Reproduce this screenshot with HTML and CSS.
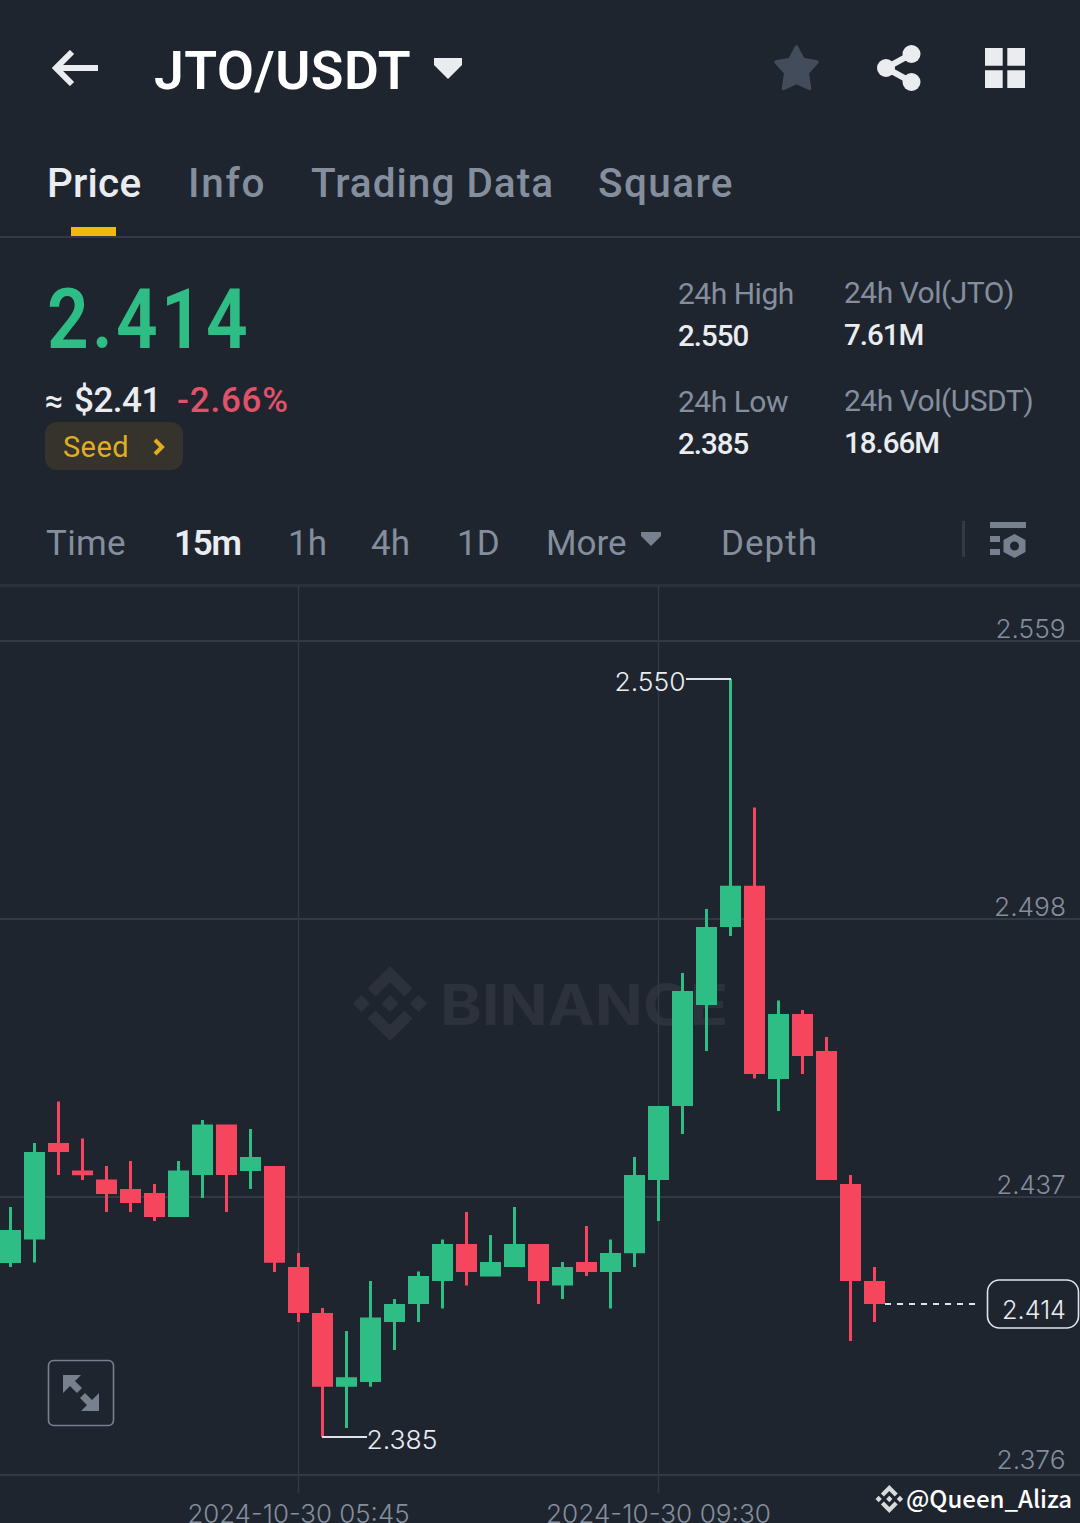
FILE: index.html
```html
<!DOCTYPE html>
<html lang="en">
<head>
<meta charset="utf-8">
<title>JTO/USDT</title>
<link rel="stylesheet" href="styles.css">
</head>
<body>
<header class="topbar">
  <svg class="back" width="46" height="36" viewBox="0 0 46 36"><path d="M20 2 4 18l16 16M4 18h42" fill="none" stroke="currentColor" stroke-width="6"/></svg>
  <h1 class="pair">JTO/USDT</h1>
  <svg class="pair-caret" width="28" height="21" viewBox="0 0 28 21"><path d="M0 0h28v7L14 21 0 7z" fill="currentColor"/></svg>
  <div class="actions">
    <svg class="star" width="45" height="46" viewBox="0 0 45 46"><path d="M22.5 2 29 14.5 43 17 33.2 27.7 35.5 43.5 22.5 37.5 9.500 43.500 11.800 27.700 2 17 16 14.500z" fill="currentColor" stroke="currentColor" stroke-width="3.500" stroke-linejoin="round"/></svg>
    <svg width="44" height="46" viewBox="0 0 44 46"><path d="M34.500 9 9 23l25.500 14" fill="none" stroke="currentColor" stroke-width="6"/><circle cx="34.500" cy="9" r="9" fill="currentColor"/><circle cx="9" cy="23" r="9" fill="currentColor"/><circle cx="34.500" cy="37" r="9" fill="currentColor"/></svg>
    <svg width="40" height="40" viewBox="0 0 40 40"><path d="M0 0h17.700v17.700H0zM22.300 0H40v17.700H22.300zM0 22.300h17.700V40H0zM22.300 22.300H40V40H22.300z" fill="currentColor"/></svg>
  </div>
</header>

<nav class="tabs">
  <span class="tab tab-active">Price</span>
  <span class="tab tab-info">Info</span>
  <span class="tab tab-data">Trading Data</span>
  <span class="tab tab-square">Square</span>
</nav>

<section class="summary">
  <div class="quote">
    <div class="price">2.414</div>
    <div class="change"><span class="approx">≈</span><span class="usd">$2.41</span><span class="percent">-2.66%</span></div>
    <div class="badge">Seed<svg width="12" height="18" viewBox="0 0 12 18"><path d="M2 2l7 7-7 7" fill="none" stroke="currentColor" stroke-width="4"/></svg></div>
  </div>
  <dl class="stats">
    <div class="stat"><dt>24h High</dt><dd>2.550</dd></div>
    <div class="stat stat-vol"><dt>24h Vol(JTO)</dt><dd>7.61M</dd></div>
    <div class="stat"><dt>24h Low</dt><dd>2.385</dd></div>
    <div class="stat stat-vol"><dt>24h Vol(USDT)</dt><dd>18.66M</dd></div>
  </dl>
</section>

<nav class="frames">
  <span class="time">Time</span>
  <span class="frame-active">15m</span>
  <span>1h</span>
  <span>4h</span>
  <span>1D</span>
  <span class="more">More<svg width="20" height="14" viewBox="0 0 20 14"><path d="M0 0h20v4L10 14 0 4z" fill="currentColor"/></svg></span>
  <span class="depth">Depth</span>
  <i class="divider"></i>
  <svg class="settings" width="36" height="36" viewBox="0 0 36 36"><path d="M0 0h36v6H0zM0 14h10v6H0zM0 27h10v6H0z" fill="currentColor"/><path fill-rule="evenodd" d="M24.500 12 35.500 18v12l-11 6-11-6V18zM24.500 19.500a4.500 4.500 0 1 0 0 9 4.500 4.500 0 0 0 0-9z" fill="currentColor"/></svg>
</nav>

<main class="chart">
  <svg class="plot" width="1080" height="939" viewBox="0 584 1080 939">
    <defs>
      <g id="logo">
        <path d="M37 0 59.500 22.500 51.500 30.500 37 16 22.500 30.500 14.500 22.500z"/>
        <path d="M37 75 59.500 52.500 51.500 44.500 37 59 22.500 44.500 14.500 52.500z"/>
        <path d="M8.500 29 17 37.500 8.500 46 0 37.500zM37 29l8.500 8.500L37 46l-8.500-8.500zM65.500 29l8.500 8.500-8.500 8.500-8.500-8.500z"/>
      </g>
    </defs>
    <g class="brand">
      <use href="#logo" x="353" y="966"/>
      <text class="brand-name" x="440" y="1024.500" textLength="288" lengthAdjust="spacingAndGlyphs">BINANCE</text>
    </g>
    <rect class="edge" x="0" y="584" width="1080" height="3"/>
    <path class="grid" d="M0 641H1080M0 919H1080M0 1197H1080M0 1475H1080"/>
    <path class="grid grid-time" d="M298.500 586V1493M658.500 586V1493"/>
    <g class="axis">
      <text x="995.500" y="638" textLength="70" lengthAdjust="spacingAndGlyphs">2.559</text>
      <text x="994" y="916" textLength="72" lengthAdjust="spacingAndGlyphs">2.498</text>
      <text x="996.500" y="1194" textLength="69" lengthAdjust="spacingAndGlyphs">2.437</text>
      <text x="996.500" y="1469" textLength="69" lengthAdjust="spacingAndGlyphs">2.376</text>
      <text x="187.500" y="1523" textLength="222" lengthAdjust="spacingAndGlyphs">2024-10-30 05:45</text>
      <text x="546" y="1523" textLength="225" lengthAdjust="spacingAndGlyphs">2024-10-30 09:30</text>
    </g>
    <g id="candles"></g>
    <g class="notes">
      <path d="M686 679h45M322 1437h45"/>
      <path d="M885 1304h92" stroke-dasharray="6 6"/>
      <text x="614.500" y="691" textLength="71" lengthAdjust="spacingAndGlyphs">2.550</text>
      <text x="366.500" y="1449" textLength="71" lengthAdjust="spacingAndGlyphs">2.385</text>
      <rect class="tag" x="987.500" y="1280" width="91" height="48" rx="12"/>
      <text x="1002" y="1318.500" textLength="64" lengthAdjust="spacingAndGlyphs">2.414</text>
    </g>
    <g class="expand">
      <rect x="48.500" y="1360.500" width="65" height="65" rx="5"/>
      <path d="M63 1375h18l-6 6 7 7-5 5-7-7-7 7zM99 1411H81l6-6-7-7 5-5 7 7 7-7z"/>
    </g>
    <g class="credit">
      <use href="#logo" transform="translate(875.500 1485) scale(.373)"/>
      <text x="906" y="1508" textLength="166">@Queen_Aliza</text>
    </g>
  </svg>
</main>
<script src="chart.js"></script>
</body>
</html>
```
FILE: styles.css
```css
* { box-sizing: border-box; }
body {
  margin: 0;
  width: 1080px;
  height: 1523px;
  overflow: hidden;
  background: #1f252f;
  color: #eaecef;
  font-family: Roboto, "Noto Sans", sans-serif;
}
svg { display: block; flex: none; }

.topbar {
  display: flex;
  align-items: center;
  height: 136px;
  padding: 0 55px 0 52px;
}
.pair {
  margin: 4px 0 0 56px;
  width: 258px;
  font-size: 53.500px;
  font-weight: 600;
  letter-spacing: 0.500px;
  color: #fff;
  white-space: nowrap;
}
.pair-caret { margin-left: 22px; }
.actions { display: flex; align-items: center; margin-left: auto; gap: 58px; }
.actions svg:last-child { margin-left: 6px; }
.star { color: #434c5a; }

.tabs {
  display: grid;
  grid-template-columns: 141px 123px 287px 140px;
  height: 102px;
  padding-left: 47px;
  border-bottom: 2px solid #333a46;
  font-size: 40.500px;
  font-weight: 500;
  line-height: 95px;
  color: #848e9c;
  white-space: nowrap;
}
.tab-active { color: #eaecef; letter-spacing: 0.200px; }
.tab-active::after {
  content: "";
  display: block;
  width: 45px;
  height: 9px;
  margin: -4px 0 0 24px;
  background: #f0b90b;
}
.tab-info { letter-spacing: 1.700px; }
.tab-data { letter-spacing: 1px; }
.tab-square { letter-spacing: 1.400px; }

.summary { display: flex; justify-content: space-between; height: 262px; padding: 0 24px 0 45px; }
.quote { padding-top: 37px; }
.price {
  width: 240px;
  margin-left: 2px;
  font-size: 83px;
  font-weight: 600;
  line-height: 90px;
  letter-spacing: 3.700px;
  color: #2ebd85;
  transform: scaleX(0.880);
  transform-origin: left;
}
.change { display: flex; height: 57px; line-height: 72px; font-size: 35px; font-weight: 500; white-space: nowrap; }
.approx { width: 29px; font-size: 32px; }
.usd { width: 103px; letter-spacing: -0.500px; }
.percent { color: #e0526a; letter-spacing: 0.800px; }
.badge {
  display: flex;
  align-items: center;
  justify-content: space-between;
  width: 138px;
  height: 48px;
  padding: 1px 18px 0;
  border-radius: 12px;
  background: #35332b;
  color: #dfae22;
  font-size: 29px;
  letter-spacing: 0.400px;
}
.stats {
  display: grid;
  grid-template-columns: 166px 212px;
  grid-template-rows: 108px 108px;
  margin: 35px 0 0;
  font-size: 30px;
  line-height: 42px;
  white-space: nowrap;
}
.stat-vol { margin-top: -1px; }
.stat dt { color: #848e9c; letter-spacing: -0.500px; }
.stat dd { margin: 0; font-weight: 500; font-size: 29.500px; letter-spacing: -1px; }

.frames {
  display: grid;
  grid-template-columns: 128px 114px 83px 86px 89px 175px 241px 28px 36px;
  height: 84px;
  padding-left: 46px;
  font-size: 35px;
  line-height: 88px;
  color: #848e9c;
  white-space: nowrap;
}
.frame-active { color: #eaecef; font-weight: 600; letter-spacing: -1.300px; }
.time { letter-spacing: 0.300px; }
.more { display: flex; justify-content: space-between; width: 115px; }
.more svg { margin-top: 32px; color: #76808f; }
.depth { letter-spacing: 1px; }
.divider { width: 3px; height: 36px; margin-top: 21px; background: #333a46; }
.settings { margin-top: 22px; color: #76808f; }

.chart { height: 939px; }
.plot text { font-family: Inter, "Liberation Sans", sans-serif; font-size: 26px; font-weight: 300; }
.brand { fill: #2c313c; }
.plot .brand-name { font-size: 56.500px; font-weight: 700; }
.edge { fill: #2b313c; }
.grid { stroke: #323945; stroke-width: 2; fill: none; }
.grid-time { stroke-width: 1.500; }
.axis { fill: #848e9c; }
.up { fill: #2ebd85; }
.down { fill: #f6465d; }
.notes path { stroke: #dfe2e7; stroke-width: 2; fill: none; }
.notes text { fill: #eaecef; }
.tag { fill: #1f252f; stroke: #dfe2e7; stroke-width: 1.600; }
.expand { fill: #76808f; }
.expand rect { fill: none; stroke: #76808f; stroke-width: 1.600; }
.credit { fill: #d9dadc; }
.plot .credit text { fill: #fff; font-family: "Noto Sans CJK SC", sans-serif; font-size: 24px; font-weight: 500; }
```
FILE: chart.js
```js
// Each candle: direction, wick top, body top, body bottom, wick bottom.
const candles = [
  ["up", 1207, 1230, 1263, 1267],
  ["up", 1143, 1152, 1239.5, 1262.5],
  ["down", 1101.5, 1143, 1152, 1175],
  ["down", 1138.5, 1170.5, 1175.3, 1180],
  ["down", 1166, 1179.5, 1194, 1212],
  ["down", 1161, 1189, 1203, 1212],
  ["down", 1184, 1193, 1217, 1221],
  ["up", 1161, 1170.5, 1217, 1217],
  ["up", 1120, 1124.5, 1175, 1198],
  ["down", 1124.5, 1124.5, 1175, 1212],
  ["up", 1129, 1157, 1171, 1189],
  ["down", 1166, 1166, 1262.7, 1272],
  ["down", 1253, 1267, 1313, 1322],
  ["down", 1308, 1313, 1386.7, 1437],
  ["up", 1331, 1377.3, 1386.7, 1428],
  ["up", 1281, 1317.5, 1382, 1386.7],
  ["up", 1299, 1304, 1322, 1350],
  ["up", 1271.5, 1276, 1304, 1322],
  ["up", 1239.5, 1244, 1281, 1308.5],
  ["down", 1212, 1244, 1272, 1285.5],
  ["up", 1235, 1262, 1276.5, 1276.5],
  ["up", 1207, 1244, 1267, 1267],
  ["down", 1244, 1244, 1281, 1304],
  ["up", 1262, 1267, 1285.5, 1299],
  ["down", 1226, 1262, 1272, 1276],
  ["up", 1239.5, 1253, 1272, 1308.5],
  ["up", 1157, 1175, 1253.3, 1267],
  ["up", 1106, 1106, 1180, 1221],
  ["up", 973, 991, 1106, 1134],
  ["up", 909, 927, 1005, 1051],
  ["up", 679, 885.7, 927, 936],
  ["down", 807.5, 885.7, 1074, 1078.5],
  ["up", 1000.5, 1014, 1079, 1111],
  ["down", 1010, 1014, 1056, 1074],
  ["down", 1037, 1051, 1180, 1180],
  ["down", 1175, 1184, 1281, 1341],
  ["down", 1267, 1281, 1304, 1322]
];

const ns = "http://www.w3.org/2000/svg";
const layer = document.getElementById("candles");
candles.forEach(([dir, high, top, bottom, low], i) => {
  const x = i * 24;
  const path = document.createElementNS(ns, "path");
  path.setAttribute("class", dir);
  path.setAttribute("d", `M${x} ${top}h21V${bottom}h-21zM${x + 9} ${high}h3V${low}h-3z`);
  layer.appendChild(path);
});
```
